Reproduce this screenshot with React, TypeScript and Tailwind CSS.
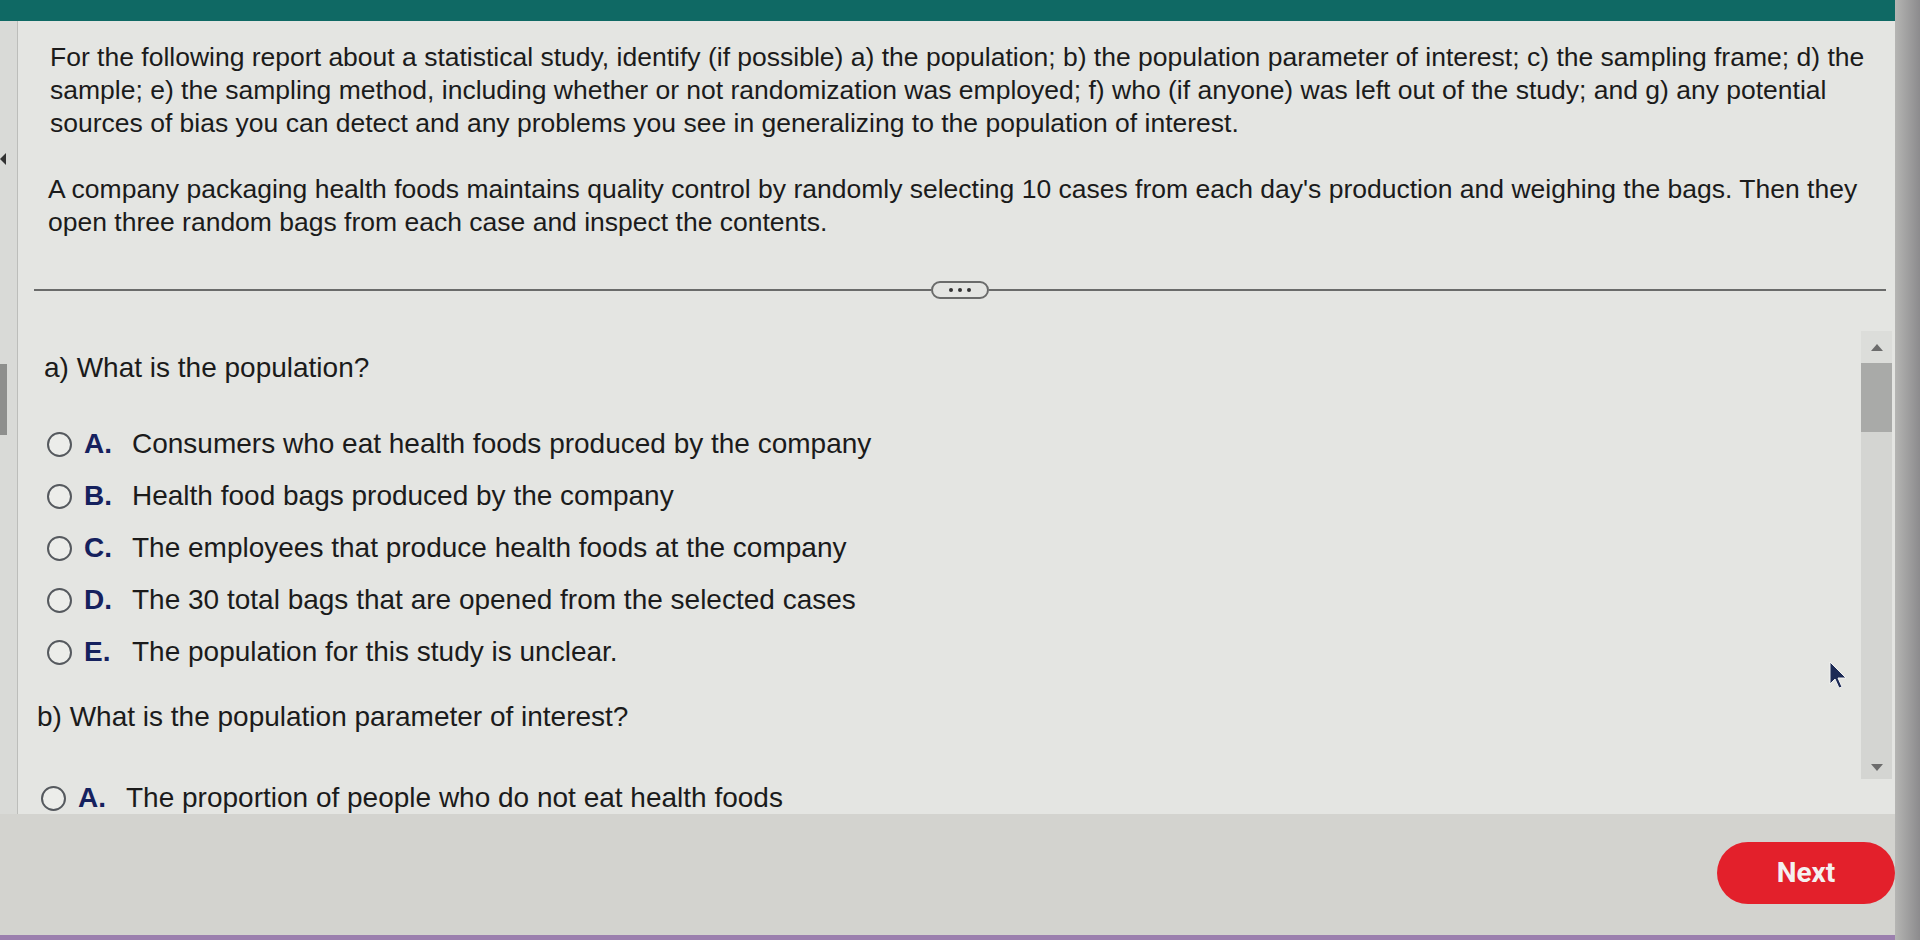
import React from 'react';

const options = [
  { key: 'A', text: 'Consumers who eat health foods produced by the company' },
  { key: 'B', text: 'Health food bags produced by the company' },
  { key: 'C', text: 'The employees that produce health foods at the company' },
  { key: 'D', text: 'The 30 total bags that are opened from the selected cases' },
  { key: 'E', text: 'The population for this study is unclear.' },
];

const Radio: React.FC = () => (
  <span className="w-[25px] h-[25px] rounded-full border-[2.5px] border-[#55595e] bg-[#ecedea] shrink-0" />
);

const Option: React.FC<{ letter: string; text: string; last?: boolean }> = ({ letter, text, last }) => (
  <div className={last ? 'flex items-center h-[30px]' : 'flex items-center h-[52px]'}>
    <Radio />
    <span className="ml-[12px] w-[48px] font-bold text-[#15215e]">{letter}.</span>
    <span className="whitespace-nowrap">{text}</span>
  </div>
);

export default function App() {
  return (
    <div
      className="w-[1920px] h-[940px] flex overflow-hidden bg-[#b9b9b7] text-[#1b1b1b]"
      style={{ fontFamily: '"Liberation Sans", Arial, sans-serif' }}
    >
      <div className="w-[1895px] flex flex-col">
        {/* top bar */}
        <div className="h-[21px] bg-[#0f6964]" />

        <div className="flex-1 flex min-h-0">
          {/* left edge strip */}
          <div className="w-[18px] bg-[#d9dad7] border-r border-[#bcbdba] flex flex-col">
            <div className="h-[132px]" />
            <div className="w-0 h-0 border-y-[6px] border-y-transparent border-r-[6px] border-r-[#333]" />
            <div className="h-[199px]" />
            <div className="w-[7px] h-[71px] bg-[#8e8f8d]" />
          </div>

          {/* question panel */}
          <div className="flex-1 flex flex-col bg-[#e4e5e2]">
            <div className="flex-1 relative min-h-0">
              <div className="pl-[32px] pr-[10px] pt-[20px] text-[26.5px] leading-[33px] whitespace-nowrap">
                <p>
                  For the following report about a statistical study, identify (if possible) a) the population; b) the population parameter of interest; c) the sampling frame; d) the
                  <br />
                  sample; e) the sampling method, including whether or not randomization was employed; f) who (if anyone) was left out of the study; and g) any potential
                  <br />
                  sources of bias you can detect and any problems you see in generalizing to the population of interest.
                </p>
                <p className="mt-[33px] -ml-[2px]">
                  A company packaging health foods maintains quality control by randomly selecting 10 cases from each day's production and weighing the bags. Then they
                  <br />
                  open three random bags from each case and inspect the contents.
                </p>
              </div>

              {/* divider */}
              <div className="flex items-center pl-[16px] pr-[9px] mt-[42px]">
                <div className="flex-1 h-[2px] bg-[#6a6b6a]" />
                <div className="w-[58px] h-[18px] rounded-full border-2 border-[#6a6b6a] flex items-center justify-center gap-[5px] bg-[#e4e5e2]">
                  <span className="w-[4px] h-[4px] rounded-full bg-[#333]" />
                  <span className="w-[4px] h-[4px] rounded-full bg-[#333]" />
                  <span className="w-[4px] h-[4px] rounded-full bg-[#333]" />
                </div>
                <div className="flex-1 h-[2px] bg-[#6a6b6a]" />
              </div>

              <div className="flex">
                <div className="flex-1 pl-[26px] text-[28px]">
                  <div className="mt-[44px] leading-[50px]">a) What is the population?</div>
                  <div className="mt-[25px] pl-[3px]">
                    {options.map((o) => (
                      <Option key={o.key} letter={o.key} text={o.text} />
                    ))}
                  </div>
                  <div className="mt-[14px] leading-[50px] -ml-[7px]">b) What is the population parameter of interest?</div>
                  <div className="mt-[41px] -ml-[3px]">
                    <Option letter="A" text="The proportion of people who do not eat health foods" last />
                  </div>
                </div>

                {/* scrollbar */}
                <div className="w-[31px] mr-[3px] mt-[32px] h-[448px] flex flex-col items-center bg-[#d4d5d2]">
                  <div className="h-[32px] w-full flex items-center justify-center bg-[#dcddda]">
                    <div className="w-0 h-0 border-x-[6px] border-x-transparent border-b-[7px] border-b-[#6c6c6c]" />
                  </div>
                  <div className="w-full h-[69px] bg-[#a9aaa8]" />
                  <div className="flex-1" />
                  <div className="h-[24px] flex items-center justify-center">
                    <div className="w-0 h-0 border-x-[6px] border-x-transparent border-t-[7px] border-t-[#6c6c6c]" />
                  </div>
                </div>
              </div>

              {/* mouse cursor */}
              <svg className="absolute left-[1810px] top-[639px]" width="22" height="30" viewBox="0 0 22 30">
                <path d="M2 2 L2 24 L7 19 L11 28 L14 27 L10 18 L18 18 Z" fill="#1c2a55" stroke="#f2f2f2" strokeWidth="1" />
              </svg>
            </div>
          </div>
        </div>

        {/* footer */}
        <div className="h-[126px] bg-[#d3d3cf] flex flex-col">
          <div className="flex-1 flex items-center justify-end">
            <button className="w-[178px] h-[62px] rounded-full bg-[#e3202b] text-[#f4f0f0] text-[28px] font-bold -mt-[4px]" style={{ fontFamily: 'Roboto, "Liberation Sans", sans-serif' }}>
              Next
            </button>
          </div>
          <div className="h-[5px] bg-[#9b7fae]" />
        </div>
      </div>

      {/* right bezel */}
      <div className="flex-1 bg-gradient-to-r from-[#b5b5b3] to-[#8c8b8d]" />
    </div>
  );
}
